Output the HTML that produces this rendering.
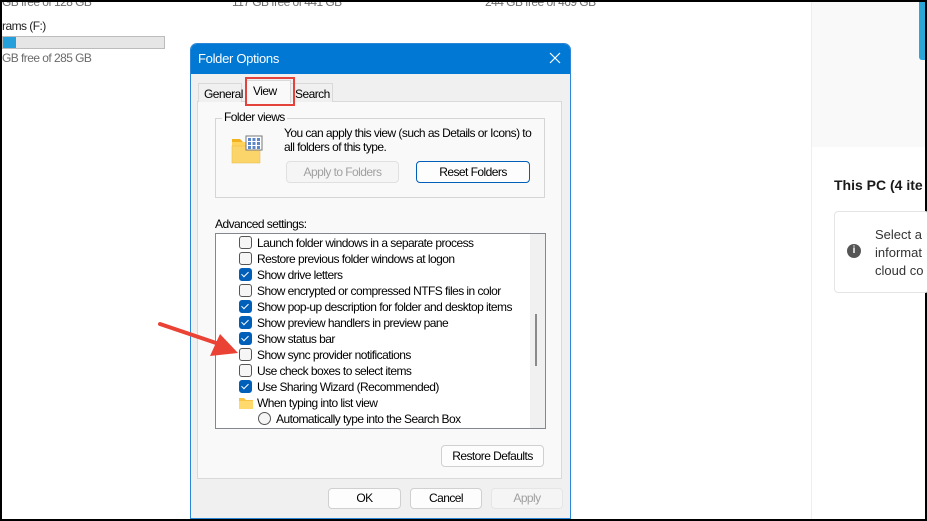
<!DOCTYPE html>
<html><head><meta charset="utf-8"><style>
*{margin:0;padding:0;box-sizing:border-box}
body{width:927px;height:521px;overflow:hidden;background:#fff;font-family:"Liberation Sans",sans-serif;font-size:12px;letter-spacing:-0.55px;color:#000;position:relative}
.a{position:absolute;white-space:nowrap}
.g{color:#6b6b6b;font-size:12px}
.btn{position:absolute;border:1px solid #d0d0d0;border-radius:4px;background:#fdfdfd;text-align:center;font-size:12px}
.row{position:absolute;left:239px;height:16px;white-space:nowrap}
.cb{position:absolute;left:0;top:1px;width:13px;height:13px;border:1px solid #555;border-radius:3px;background:#f6f6f6}
.cb.on{background:#005fb8;border-color:#005fb8}
.cb.on:after{content:"";position:absolute;left:3px;top:1px;width:3px;height:6px;border:solid #fff;border-width:0 1.3px 1.3px 0;transform:rotate(45deg)}
.row span{position:absolute;left:18px;top:0;font-size:12px;line-height:16px}
</style></head><body>

<div class="a g" style="left:2px;top:-5px">GB free of 128 GB</div>
<div class="a g" style="left:232px;top:-5px">117 GB free of 441 GB</div>
<div class="a g" style="left:485px;top:-5px">244 GB free of 469 GB</div>
<div class="a" style="left:0;top:0;width:927px;height:2px;background:#000"></div>
<div class="a" style="left:0;top:0;width:2px;height:521px;background:#000"></div>
<div class="a" style="left:925px;top:0;width:2px;height:521px;background:#000"></div>
<div class="a" style="left:0;top:519px;width:927px;height:2px;background:#000"></div>

<div class="a" style="left:2px;top:19px;font-size:12px;color:#222">rams (F:)</div>
<div class="a" style="left:2px;top:36px;width:163px;height:13px;background:#e6e6e6;border:1px solid #bcbcbc"></div>
<div class="a" style="left:3px;top:37px;width:13px;height:11px;background:#26a0da"></div>
<div class="a g" style="left:2px;top:51px">GB free of 285 GB</div>

<div class="a" style="left:811px;top:2px;width:114px;height:145px;background:#f9f9f9;border-left:1px solid #eee"></div>
<div class="a" style="left:811px;top:147px;width:1px;height:372px;background:#eee"></div>
<div class="a" style="left:919px;top:2px;width:6px;height:58px;background:#2aa6d8;border-radius:0 0 0 3px"></div>
<div class="a" style="left:834px;top:177px;font-size:14px;color:#1a1a1a;font-weight:bold;letter-spacing:0">This PC (4 ite</div>
<div class="a" style="left:834px;top:211px;width:95px;height:82px;border:1px solid #e5e5e5;border-radius:4px;background:#fff"></div>
<div class="a" style="left:847px;top:244px;width:14px;height:14px;border-radius:50%;background:#555;color:#fff;font-size:10px;text-align:center;line-height:14px;font-weight:bold;letter-spacing:0">i</div>
<div class="a" style="left:875px;top:226px;font-size:13px;line-height:18px;color:#333;letter-spacing:0">Select a<br>informat<br>cloud co</div>

<div class="a" style="left:190px;top:43px;width:381px;height:476px;background:#f0f0f0;border:1px solid #2b86d8;border-radius:7px 7px 0 0;overflow:hidden">
 <div style="position:absolute;left:0;top:0;width:381px;height:30px;background:#0078d4"></div>
</div>
<div class="a" style="left:198px;top:51px;font-size:13px;color:#fff;letter-spacing:-0.3px">Folder Options</div>
<svg class="a" style="left:549px;top:52px" width="12" height="12"><path d="M1 1L11 11M11 1L1 11" stroke="#fff" stroke-width="1.2"/></svg>

<div class="a" style="left:197px;top:101px;width:365px;height:378px;background:#f9f9f9;border:1px solid #d9d9d9"></div>
<div class="a" style="left:198px;top:83px;width:44px;height:19px;border:1px solid #d9d9d9;border-bottom:none;background:#f0f0f0;padding:3px 0 0 5px">General</div>
<div class="a" style="left:290px;top:83px;width:43px;height:19px;border:1px solid #d9d9d9;border-bottom:none;background:#f0f0f0;padding:3px 0 0 4px">Search</div>
<div class="a" style="left:245px;top:80px;width:46px;height:23px;border:1px solid #d9d9d9;border-bottom:none;background:#f9f9f9;padding:3px 0 0 7px">View</div>
<div class="a" style="left:245px;top:77px;width:50px;height:29px;border:2px solid #e4433c"></div>

<div class="a" style="left:215px;top:118px;width:330px;height:80px;border:1px solid #d5d5d5"></div>
<div class="a" style="left:222px;top:110px;background:#f9f9f9;padding:0 2px">Folder views</div>
<svg class="a" style="left:230px;top:134px" width="34" height="32" viewBox="0 0 34 32">
<path d="M2 5h8l3 3h-11z" fill="#f2b11f"/><rect x="2" y="8" width="28" height="21" fill="#ffd35c"/><rect x="2" y="12" width="28" height="17" fill="#fcd56a" stroke="#e8b844" stroke-width=".5"/>
<rect x="16" y="2" width="16" height="14" fill="#fff" stroke="#777"/>
<g fill="#5b86c8"><rect x="18" y="4" width="3" height="3"/><rect x="22.5" y="4" width="3" height="3"/><rect x="27" y="4" width="3" height="3"/><rect x="18" y="8" width="3" height="3"/><rect x="22.5" y="8" width="3" height="3"/><rect x="27" y="8" width="3" height="3"/><rect x="18" y="12" width="3" height="3"/><rect x="22.5" y="12" width="3" height="3"/><rect x="27" y="12" width="3" height="3"/></g>
</svg>
<div class="a" style="left:284px;top:126px;line-height:14px">You can apply this view (such as Details or Icons) to<br>all folders of this type.</div>
<div class="btn" style="left:286px;top:161px;width:113px;height:22px;line-height:20px;color:#a0a0a0;background:#f5f5f5;border-color:#e0e0e0">Apply to Folders</div>
<div class="btn" style="left:416px;top:161px;width:114px;height:22px;line-height:20px;border-color:#005fb8">Reset Folders</div>

<div class="a" style="left:215px;top:217px">Advanced settings:</div>
<div class="a" style="left:215px;top:233px;width:331px;height:196px;background:#fff;border:1px solid #828790"></div>
<div class="a" style="left:530px;top:234px;width:15px;height:194px;background:#f0f0f0"></div>
<div class="a" style="left:535px;top:314px;width:2px;height:52px;background:#8a8a8a"></div>

<div class="row" style="top:235px"><div class="cb"></div><span>Launch folder windows in a separate process</span></div>
<div class="row" style="top:251px"><div class="cb"></div><span>Restore previous folder windows at logon</span></div>
<div class="row" style="top:267px"><div class="cb on"></div><span>Show drive letters</span></div>
<div class="row" style="top:283px"><div class="cb"></div><span>Show encrypted or compressed NTFS files in color</span></div>
<div class="row" style="top:299px"><div class="cb on"></div><span>Show pop-up description for folder and desktop items</span></div>
<div class="row" style="top:315px"><div class="cb on"></div><span>Show preview handlers in preview pane</span></div>
<div class="row" style="top:331px"><div class="cb on"></div><span>Show status bar</span></div>
<div class="row" style="top:347px"><div class="cb"></div><span>Show sync provider notifications</span></div>
<div class="row" style="top:363px"><div class="cb"></div><span>Use check boxes to select items</span></div>
<div class="row" style="top:379px"><div class="cb on"></div><span>Use Sharing Wizard (Recommended)</span></div>
<div class="row" style="top:395px"><svg style="position:absolute;left:0;top:2px" width="14" height="12"><path d="M0 1h5l2 2h7v9h-14z" fill="#f8c446"/><rect x="0" y="4" width="14" height="8" fill="#ffd96b"/></svg><span>When typing into list view</span></div>
<div class="row" style="top:411px;left:258px"><div style="position:absolute;left:0;top:1px;width:13px;height:13px;border:1px solid #555;border-radius:50%;background:#f6f6f6"></div><span>Automatically type into the Search Box</span></div>

<div class="btn" style="left:441px;top:445px;width:103px;height:22px;line-height:20px">Restore Defaults</div>
<div class="btn" style="left:328px;top:488px;width:73px;height:21px;line-height:19px">OK</div>
<div class="btn" style="left:410px;top:488px;width:72px;height:21px;line-height:19px">Cancel</div>
<div class="btn" style="left:491px;top:488px;width:72px;height:21px;line-height:19px;color:#a0a0a0;background:#f5f5f5;border-color:#e5e5e5">Apply</div>

<svg class="a" style="left:150px;top:315px" width="95" height="50" viewBox="0 0 95 50">
<line x1="10" y1="9" x2="72" y2="30" stroke="#ea4335" stroke-width="4" stroke-linecap="round"/>
<path d="M88 38 L60 41 L70 19 Z" fill="#ea4335"/>
</svg>
</body></html>
